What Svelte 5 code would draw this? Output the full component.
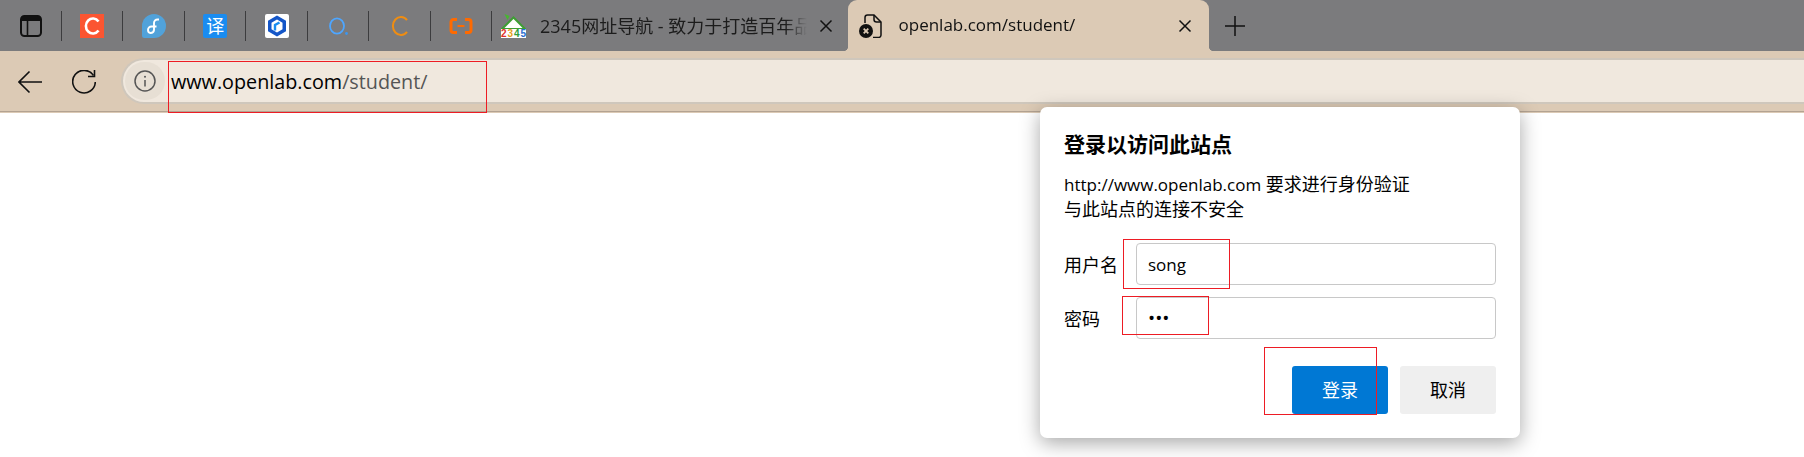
<script>
  const pinned = ['csdn', 'fedora', 'yi', 'cube', 'o', 'c', 'ali'];
</script>

<div class="browser">
  <div class="tabstrip">
    <div class="slot first">
      <svg width="24" height="24" viewBox="0 0 24 24" fill="none" stroke="#111" stroke-width="2">
        <rect x="2" y="2" width="20" height="20" rx="3.5" />
        <path d="M2 5.5a3.5 3.5 0 0 1 3.5-3.5h13a3.5 3.5 0 0 1 3.5 3.5V7H2z" fill="#111" stroke="none" />
        <path d="M8.5 7v15" stroke-width="1.6" />
      </svg>
    </div>
    {#each pinned as p}
      <div class="slot">
        {#if p === 'csdn'}
          <svg width="24" height="24" viewBox="0 0 24 24">
            <rect width="24" height="24" fill="#fb5531" />
            <path d="M18.5 7.5A7 7.5 0 1 0 18.5 16.5" fill="none" stroke="#fff" stroke-width="2.6" />
          </svg>
        {:else if p === 'fedora'}
          <svg width="24" height="24" viewBox="0 0 24 24">
            <path d="M12 0a12 12 0 0 1 0 24H2.5A2.5 2.5 0 0 1 0 21.5V12A12 12 0 0 1 12 0z" fill="#51a2da" />
            <path d="M17 5.5h-1.5A3.5 3.5 0 0 0 12 9v7a3.5 3.5 0 0 1-3.5 3A3 3 0 0 1 6 16a3.5 3.5 0 0 1 3.5-3.5h5" fill="none" stroke="#fff" stroke-width="1.9" />
          </svg>
        {:else if p === 'yi'}
          <div class="yi">译</div>
        {:else if p === 'cube'}
          <svg width="24" height="24" viewBox="0 0 24 24">
            <rect width="24" height="24" rx="2" fill="#fff" />
            <path d="M12 1.500 21 6.700v10.600L12 22.500 3 17.300V6.700z" fill="#1456c8" />
            <path d="M12 5.500 17.500 8.700v6.600L12 18.500 6.500 15.300V8.700z" fill="#fff" />
            <path d="M10 16.500v-5.500l4.500-2.500" fill="none" stroke="#1a8cf0" stroke-width="2.400" />
          </svg>
        {:else if p === 'o'}
          <svg width="24" height="24" viewBox="0 0 24 24" fill="none">
            <ellipse cx="11" cy="12" rx="7" ry="7.700" stroke="#4ea6ff" stroke-width="1.800" />
            <circle cx="20.500" cy="19.500" r="1.400" fill="#3b96f0" />
          </svg>
        {:else if p === 'c'}
          <svg width="24" height="24" viewBox="0 0 24 24" fill="none">
            <path d="M19 6.200A8 9 0 1 0 19 17.800" stroke="#ef8d12" stroke-width="2" />
          </svg>
        {:else}
          <svg width="24" height="24" viewBox="0 0 24 24" fill="none">
            <path d="M8 5.500H4.500A2.500 2.500 0 0 0 2 8v8a2.500 2.500 0 0 0 2.500 2.500H8M16 5.500h3.500A2.500 2.500 0 0 1 22 8v8a2.500 2.500 0 0 1-2.500 2.500H16" stroke="#ff6a00" stroke-width="3" />
            <path d="M8.500 12h7" stroke="#ff6a00" stroke-width="2" />
          </svg>
        {/if}
      </div>
    {/each}

    <div class="tab">
      <div class="house">
        <svg width="25" height="16" viewBox="0 0 25 16">
          <path d="M1 15 12.500 3.500 24 15z" fill="#fff" stroke="#3f9e35" stroke-width="2" />
          <path d="M3.500 0l5 2-2 4z" fill="#46b82f" />
        </svg>
        <span class="house-num"><i class="r">2</i><i class="o">3</i><i class="g">4</i><i class="b">5</i></span>
      </div>
      <span class="tab-title">2345网址导航 - 致力于打造百年品牌</span>
      <svg class="close" width="14" height="14" viewBox="0 0 14 14"><path d="M1.500 1.500l11 11M12.500 1.500l-11 11" stroke="#111" stroke-width="1.500" /></svg>
    </div>

    <div class="tab active">
      <svg width="24" height="24" viewBox="0 0 24 24" fill="none" stroke="#111" stroke-width="1.500">
        <path d="M6 9V3.500A2.500 2.500 0 0 1 8.500 1h6.500l7 7v13a2.500 2.500 0 0 1-2.500 2.500H14" />
        <path d="M15 1v4.500A2.500 2.500 0 0 0 17.500 8H22" />
        <circle cx="7" cy="17" r="7" fill="#111" stroke="none" />
        <path d="M4.700 14.700l4.600 4.600M9.300 14.700l-4.600 4.600" stroke="#dccab5" stroke-width="1.800" />
      </svg>
      <span class="tab-title">openlab.com/student/</span>
      <svg class="close" width="14" height="14" viewBox="0 0 14 14"><path d="M1.500 1.500l11 11M12.500 1.500l-11 11" stroke="#111" stroke-width="1.500" /></svg>
    </div>

    <div class="newtab">
      <svg width="20" height="20" viewBox="0 0 20 20"><path d="M10 0v20M0 10h20" stroke="#111" stroke-width="1.500" /></svg>
    </div>
  </div>

  <div class="toolbar">
    <svg class="back" width="24" height="24" viewBox="0 0 24 24" fill="none" stroke="#111" stroke-width="1.600">
      <path d="M24 12H1M11.500 1.500 1 12l10.500 10.500" />
    </svg>
    <svg class="reload" width="24" height="24" viewBox="0 0 24 24" fill="none" stroke="#111" stroke-width="1.600">
      <path d="M21.500 5.500A11.300 11.300 0 1 0 23.300 12" />
      <path d="M22.500 0v6.500H16" />
    </svg>
    <div class="address">
      <div class="info">
        <svg width="22" height="22" viewBox="0 0 22 22" fill="none">
          <circle cx="11" cy="11" r="10" stroke="#555" stroke-width="1.500" />
          <path d="M11 10v6.500" stroke="#555" stroke-width="1.500" />
          <circle cx="11" cy="6.800" r="1" fill="#555" />
        </svg>
      </div>
      <span class="url"><span class="host">www.openlab.com</span>/student/</span>
    </div>
  </div>

  <div class="page"></div>

  <div class="dialog">
    <h2>登录以访问此站点</h2>
    <p><span class="latin">http://www.openlab.com</span> 要求进行身份验证<br />与此站点的连接不安全</p>
    <div class="fields">
      <label for="user">用户名</label>
      <input id="user" type="text" value="song" />
      <label for="pass">密码</label>
      <input id="pass" class="pw" type="password" value="123" />
    </div>
    <div class="actions">
      <button class="primary"><span>登录</span></button>
      <button><span>取消</span></button>
    </div>
  </div>

  <div class="mark m1"></div>
  <div class="mark m2"></div>
  <div class="mark m3"></div>
  <div class="mark m4"></div>
</div>

<style>
  :global(body) {
    background: #fff;
    overflow: hidden;
  }
  .browser {
    position: relative;
    width: 1804px;
    height: 457px;
    font-family: "Open Sans", "Noto Sans CJK SC", sans-serif;
    color: #111;
    overflow: hidden;
  }
  .tabstrip {
    display: flex;
    height: 51px;
    background: #7b7b7d;
  }
  .slot {
    width: 61.5px;
    height: 51px;
    display: flex;
    align-items: center;
    justify-content: center;
    flex: none;
    position: relative;
  }
  .slot::after {
    content: "";
    position: absolute;
    right: 0;
    top: 11px;
    height: 30px;
    width: 1px;
    background: #3c3c3e;
  }
  .yi {
    width: 24px;
    height: 24px;
    border-radius: 2px;
    background: #1a8cf0;
    color: #fff;
    font-size: 18px;
    line-height: 24px;
    text-align: center;
  }
  .tab {
    display: flex;
    align-items: center;
    flex: none;
    width: 355.500px;
    height: 51px;
    padding: 0 13px 0 9px;
    box-sizing: border-box;
    font-size: 18px;
    color: #1c1c1c;
  }
  .house {
    position: relative;
    width: 25px;
    height: 24px;
    flex: none;
    margin-right: 14px;
  }
  .house svg {
    display: block;
  }
  .house-num {
    position: absolute;
    left: 0;
    right: 0;
    bottom: 0;
    height: 9px;
    display: flex;
    justify-content: space-between;
    background: #fff;
    font-family: "Liberation Sans", sans-serif;
    font-size: 10px;
    line-height: 9px;
    font-weight: 700;
  }
  .house-num i {
    font-style: normal;
  }
  .r { color: #e0312a; }
  .o { color: #e8a020; }
  .g { color: #2f9e3a; }
  .b { color: #2a6fd0; }
  .tab-title {
    flex: 1;
    white-space: nowrap;
    overflow: hidden;
    min-width: 0;
    margin-bottom: 2px;
    mask-image: linear-gradient(to right, #000 92%, transparent 100%);
  }
  .close {
    flex: none;
    margin-left: 12px;
    margin-right: 2px;
  }
  .tab.active {
    position: relative;
    width: 361px;
    background: #dccab5;
    border-radius: 9px 9px 0 0;
    padding: 0 15px 0 11px;
    color: #111;
    font-size: 17px;
  }
  .tab.active > svg:first-child {
    flex: none;
    margin-right: 16px;
  }
  .tab.active::before,
  .tab.active::after {
    content: "";
    position: absolute;
    bottom: 0;
    width: 5px;
    height: 5px;
  }
  .tab.active::before {
    left: -5px;
    background: radial-gradient(circle at 0 0, transparent 5px, #dccab5 5.500px);
  }
  .tab.active::after {
    right: -5px;
    background: radial-gradient(circle at 100% 0, transparent 5px, #dccab5 5.500px);
  }
  .newtab {
    display: flex;
    align-items: center;
    margin-left: 16px;
  }
  .toolbar {
    display: flex;
    align-items: flex-start;
    height: 62px;
    box-sizing: border-box;
    padding-top: 7px;
    padding-left: 18px;
    background: linear-gradient(#dccab5 0 60px, #b3a392 60px 61px, #dccab5 61px);
  }
  .back {
    margin-top: 12px;
    flex: none;
  }
  .reload {
    margin-top: 12px;
    margin-left: 30px;
    flex: none;
  }
  .address {
    flex: 1;
    margin-left: 25px;
    height: 46px;
    box-sizing: border-box;
    display: flex;
    align-items: center;
    background: #f0e8de;
    border: solid #cfc7bc;
    border-width: 2px 0 2px 2px;
    border-radius: 23px 0 0 23px;
  }
  .info {
    width: 40px;
    height: 38px;
    margin-left: 2px;
    display: flex;
    align-items: center;
    justify-content: center;
    background: #e7dfd4;
    border-radius: 19px;
    flex: none;
  }
  .url {
    margin-left: 6px;
    font-size: 19.750px;
    color: #555;
    white-space: nowrap;
  }
  .host {
    color: #000;
  }
  .page {
    height: 344px;
    background: #fff;
  }
  .dialog {
    position: absolute;
    left: 1040px;
    top: 107px;
    width: 480px;
    height: 331px;
    box-sizing: border-box;
    padding: 23px 24px 24px;
    background: #fff;
    border-radius: 7px;
    box-shadow: 0 5px 20px rgba(0, 0, 0, 0.35);
    color: #000;
    font-size: 18px;
  }
  h2 {
    margin: 0;
    font-size: 21px;
    line-height: 28px;
    font-weight: 700;
  }
  p {
    margin: 14px 0 22px;
    line-height: 24px;
  }
  .latin {
    font-size: 17px;
  }
  .fields {
    display: grid;
    grid-template-columns: 72px 360px;
    grid-auto-rows: 42px;
    row-gap: 12px;
    align-items: center;
  }
  input {
    width: 100%;
    height: 42px;
    box-sizing: border-box;
    border: 1.500px solid #c8c8c8;
    border-radius: 4px;
    padding: 0 11px;
    font: inherit;
    font-size: 17px;
    color: #000;
    outline: none;
    background: #fff;
  }
  input.pw {
    font-size: 19px;
  }
  .actions {
    display: flex;
    justify-content: flex-end;
    gap: 12px;
    margin-top: 27px;
  }
  button {
    width: 96px;
    height: 48px;
    border: none;
    border-radius: 3px;
    background: #efefef;
    color: #000;
    font: inherit;
  }
  button span {
    display: block;
    margin-top: -2px;
  }
  button.primary {
    background: #0078d4;
    color: #fff;
  }
  .mark {
    position: absolute;
    box-sizing: border-box;
    border: 1px solid #ed1c24;
  }
  .m1 { left: 168px; top: 61px; width: 319px; height: 52px; }
  .m2 { left: 1123px; top: 239px; width: 107px; height: 50px; }
  .m3 { left: 1122px; top: 296px; width: 87px; height: 39px; }
  .m4 { left: 1264px; top: 347px; width: 113px; height: 68px; }
</style>
